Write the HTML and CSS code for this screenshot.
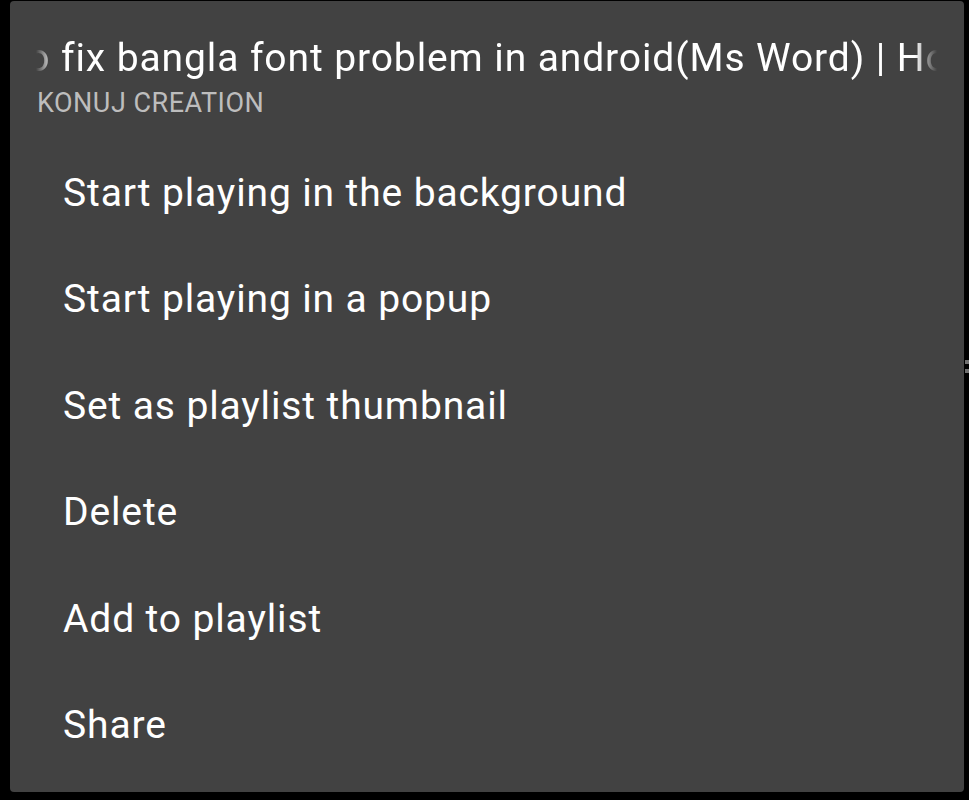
FILE: index.html
```html
<!DOCTYPE html>
<html>
<head>
<meta charset="utf-8">
<link rel="stylesheet" href="styles.css">
</head>
<body>
<div class="screen">
  <div class="dialog">
    <div class="header">
      <div class="title"><span class="title-text">to fix bangla font problem in android(Ms Word) | How to fix bangla font</span></div>
      <div class="subtitle">KONUJ CREATION</div>
    </div>
    <ul class="menu">
      <li>Start playing in the background</li>
      <li>Start playing in a popup</li>
      <li>Set as playlist thumbnail</li>
      <li>Delete</li>
      <li>Add to playlist</li>
      <li>Share</li>
    </ul>
  </div>
  <div class="edge">
    <span class="edge-mark"></span>
    <span class="edge-mark"></span>
  </div>
</div>
</body>
</html>
```

FILE: styles.css
```css
html, body {
  margin: 0;
  padding: 0;
  background: #000;
}
body {
  width: 969px;
  height: 800px;
  overflow: hidden;
  font-family: Roboto, "Noto Sans", "Liberation Sans", sans-serif;
}
.screen {
  display: flex;
  align-items: flex-start;
  padding-left: 10px;
}
.dialog {
  margin-top: 1px;
  width: 954px;
  height: 791px;
  background: #424242;
  border-radius: 4px;
  box-sizing: border-box;
  padding-top: 35px;
}
.header {
  padding-left: 26px;
  padding-right: 27px;
}
.title {
  overflow: hidden;
  white-space: nowrap;
  font-size: 39px;
  line-height: 44px;
  letter-spacing: 0.9px;
  color: #fff;
  -webkit-mask-image: linear-gradient(to right, transparent 0, #000 18px, #000 calc(100% - 22px), transparent 100%);
  mask-image: linear-gradient(to right, transparent 0, #000 18px, #000 calc(100% - 22px), transparent 100%);
}
.title-text {
  display: inline-block;
  margin-left: -22px;
}
.subtitle {
  margin-top: 7px;
  font-size: 27px;
  line-height: 32px;
  letter-spacing: 0.5px;
  color: #bdbdbd;
  padding-left: 1px;
}
.menu {
  list-style: none;
  margin: 21px 0 0;
  padding: 0;
}
.menu li {
  height: 106.4px;
  line-height: 106.4px;
  font-size: 39px;
  letter-spacing: 0.87px;
  color: #fff;
  padding-left: 53px;
  white-space: nowrap;
}
.edge {
  display: flex;
  flex-direction: column;
  gap: 5px;
  margin-top: 360px;
  margin-left: 1px;
}
.edge-mark {
  display: block;
  width: 5px;
  height: 4px;
  background: #6f6f6f;
}
```
